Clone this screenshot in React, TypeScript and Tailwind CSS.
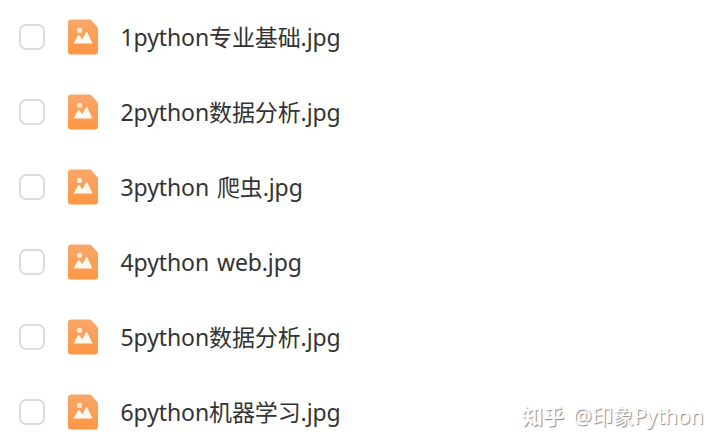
interface FileItem {
  id: number;
  name: string;
}

const FILES: FileItem[] = [
  { id: 1, name: '1python专业基础.jpg' },
  { id: 2, name: '2python数据分析.jpg' },
  { id: 3, name: '3python 爬虫.jpg' },
  { id: 4, name: '4python web.jpg' },
  { id: 5, name: '5python数据分析.jpg' },
  { id: 6, name: '6python机器学习.jpg' },
];

function ImageFileIcon() {
  return (
    <svg className="ml-[23px] h-9 w-[30px] shrink-0" viewBox="0 0 30 36" aria-hidden="true">
      <defs>
        <linearGradient id="sheet" x1="0" y1="0" x2="0" y2="1">
          <stop offset="0" stopColor="#f9a76a" />
          <stop offset="1" stopColor="#ff9644" />
        </linearGradient>
      </defs>
      <path
        d="M3 0.5h18.6c.8 0 1.500.3 2 .9l5.600 6.300c.5.6.8 1.200.8 2V32.500a3 3 0 0 1-3 3H3a3 3 0 0 1-3-3v-29a3 3 0 0 1 3-3Z"
        fill="url(#sheet)"
      />
      <circle cx="11.600" cy="11.400" r="2.600" fill="#ffe9d6" />
      <path
        d="M5.600 24.500 10 16.500q.8-1.200 1.600 0l2.700 3.800 3.600-6.600q.8-1.300 1.600 0l5 10.800Z"
        fill="#fff8f0"
      />
    </svg>
  );
}

function FileRow({ file }: { file: FileItem }) {
  return (
    <li className="flex h-[75px] items-center pl-[19px]">
      <input
        type="checkbox"
        aria-label={file.name}
        className="size-[26px] shrink-0 appearance-none rounded-[7px] border-2 border-[#dcdcdc] bg-white"
      />
      <ImageFileIcon />
      <span className="ml-[22.5px] whitespace-pre text-[23px] leading-8 tracking-[-0.1px] text-[#333333] [word-spacing:2px]">
        {file.name}
      </span>
    </li>
  );
}

export default function App() {
  return (
    <main className="relative h-[448px] w-[720px] overflow-hidden bg-white font-['Noto_Sans','Noto_Sans_CJK_SC',sans-serif]">
      <ul className="-mt-px">
        {FILES.map((file) => (
          <FileRow key={file.id} file={file} />
        ))}
      </ul>
      {/* Watermark */}
      <div className="absolute top-[400px] left-[522px] flex items-center gap-[9px] whitespace-nowrap text-[21px] leading-8 text-white [text-shadow:1px_1px_1px_#888888]">
        <span className="font-bold">知乎</span>
        <span>@印象Python</span>
      </div>
    </main>
  );
}
